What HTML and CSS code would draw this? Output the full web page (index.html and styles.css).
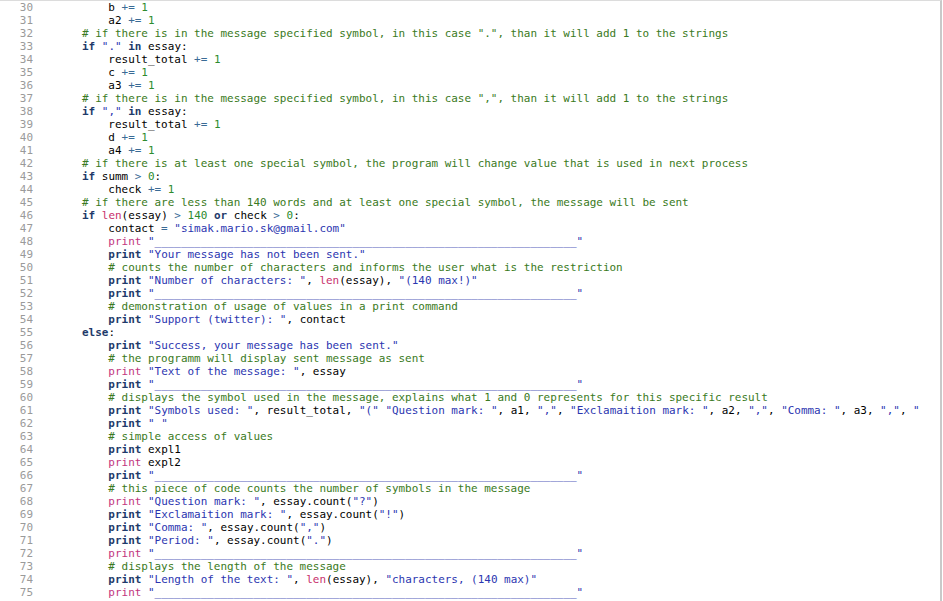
FILE: index.html
```html
<!DOCTYPE html>
<html>
<head>
<meta charset="utf-8">
<link rel="stylesheet" href="styles.css">
</head>
<body>
<div class="viewer">
<div class="ln">30</div><div class="code">        b <span class="o">+=</span> <span class="n">1</span></div>
<div class="ln">31</div><div class="code">        a2 <span class="o">+=</span> <span class="n">1</span></div>
<div class="ln">32</div><div class="code">    <span class="c"># if there is in the message specified symbol, in this case ".", than it will add 1 to the strings</span></div>
<div class="ln">33</div><div class="code">    <span class="k">if</span> <span class="s">"."</span> <span class="k">in</span> essay:</div>
<div class="ln">34</div><div class="code">        result_total <span class="o">+=</span> <span class="n">1</span></div>
<div class="ln">35</div><div class="code">        c <span class="o">+=</span> <span class="n">1</span></div>
<div class="ln">36</div><div class="code">        a3 <span class="o">+=</span> <span class="n">1</span></div>
<div class="ln">37</div><div class="code">    <span class="c"># if there is in the message specified symbol, in this case ",", than it will add 1 to the strings</span></div>
<div class="ln">38</div><div class="code">    <span class="k">if</span> <span class="s">","</span> <span class="k">in</span> essay:</div>
<div class="ln">39</div><div class="code">        result_total <span class="o">+=</span> <span class="n">1</span></div>
<div class="ln">40</div><div class="code">        d <span class="o">+=</span> <span class="n">1</span></div>
<div class="ln">41</div><div class="code">        a4 <span class="o">+=</span> <span class="n">1</span></div>
<div class="ln">42</div><div class="code">    <span class="c"># if there is at least one special symbol, the program will change value that is used in next process</span></div>
<div class="ln">43</div><div class="code">    <span class="k">if</span> summ <span class="o">&gt;</span> <span class="n">0</span>:</div>
<div class="ln">44</div><div class="code">        check <span class="o">+=</span> <span class="n">1</span></div>
<div class="ln">45</div><div class="code">    <span class="c"># if there are less than 140 words and at least one special symbol, the message will be sent</span></div>
<div class="ln">46</div><div class="code">    <span class="k">if</span> <span class="f">len</span>(essay) <span class="o">&gt;</span> <span class="n">140</span> <span class="k">or</span> check <span class="o">&gt;</span> <span class="n">0</span>:</div>
<div class="ln">47</div><div class="code">        contact <span class="o">=</span> <span class="s">"simak.mario.sk@gmail.com"</span></div>
<div class="ln">48</div><div class="code">        <span class="kp">print</span> <span class="s">"________________________________________________________________"</span></div>
<div class="ln">49</div><div class="code">        <span class="k">print</span> <span class="s">"Your message has not been sent."</span></div>
<div class="ln">50</div><div class="code">        <span class="c"># counts the number of characters and informs the user what is the restriction</span></div>
<div class="ln">51</div><div class="code">        <span class="k">print</span> <span class="s">"Number of characters: "</span>, <span class="f">len</span>(essay), <span class="s">"(140 max!)"</span></div>
<div class="ln">52</div><div class="code">        <span class="k">print</span> <span class="s">"________________________________________________________________"</span></div>
<div class="ln">53</div><div class="code">        <span class="c"># demonstration of usage of values in a print command</span></div>
<div class="ln">54</div><div class="code">        <span class="k">print</span> <span class="s">"Support (twitter): "</span>, contact</div>
<div class="ln">55</div><div class="code">    <span class="k">else</span>:</div>
<div class="ln">56</div><div class="code">        <span class="k">print</span> <span class="s">"Success, your message has been sent."</span></div>
<div class="ln">57</div><div class="code">        <span class="c"># the programm will display sent message as sent</span></div>
<div class="ln">58</div><div class="code">        <span class="kp">print</span> <span class="s">"Text of the message: "</span>, essay</div>
<div class="ln">59</div><div class="code">        <span class="k">print</span> <span class="s">"________________________________________________________________"</span></div>
<div class="ln">60</div><div class="code">        <span class="c"># displays the symbol used in the message, explains what 1 and 0 represents for this specific result</span></div>
<div class="ln">61</div><div class="code">        <span class="k">print</span> <span class="s">"Symbols used: "</span>, result_total, <span class="s">"("</span> <span class="s">"Question mark: "</span>, a1, <span class="s">","</span>, <span class="s">"Exclamaition mark: "</span>, a2, <span class="s">","</span>, <span class="s">"Comma: "</span>, a3, <span class="s">","</span>, <span class="s">"</span></div>
<div class="ln">62</div><div class="code">        <span class="k">print</span> <span class="s">" "</span></div>
<div class="ln">63</div><div class="code">        <span class="c"># simple access of values</span></div>
<div class="ln">64</div><div class="code">        <span class="k">print</span> expl1</div>
<div class="ln">65</div><div class="code">        <span class="kp">print</span> expl2</div>
<div class="ln">66</div><div class="code">        <span class="k">print</span> <span class="s">"________________________________________________________________"</span></div>
<div class="ln">67</div><div class="code">        <span class="c"># this piece of code counts the number of symbols in the message</span></div>
<div class="ln">68</div><div class="code">        <span class="kp">print</span> <span class="s">"Question mark: "</span>, essay.count(<span class="s">"?"</span>)</div>
<div class="ln">69</div><div class="code">        <span class="k">print</span> <span class="s">"Exclamaition mark: "</span>, essay.count(<span class="s">"!"</span>)</div>
<div class="ln">70</div><div class="code">        <span class="k">print</span> <span class="s">"Comma: "</span>, essay.count(<span class="s">","</span>)</div>
<div class="ln">71</div><div class="code">        <span class="k">print</span> <span class="s">"Period: "</span>, essay.count(<span class="s">"."</span>)</div>
<div class="ln">72</div><div class="code">        <span class="kp">print</span> <span class="s">"________________________________________________________________"</span></div>
<div class="ln">73</div><div class="code">        <span class="c"># displays the length of the message</span></div>
<div class="ln">74</div><div class="code">        <span class="k">print</span> <span class="s">"Length of the text: "</span>, <span class="f">len</span>(essay), <span class="s">"characters, (140 max)"</span></div>
<div class="ln">75</div><div class="code">        <span class="kp">print</span> <span class="s">"________________________________________________________________"</span></div>
</div>
</body>
</html>
```
FILE: styles.css
```css
html, body {
  margin: 0;
  padding: 0;
  background: #ffffff;
}
.viewer {
  width: 942px;
  height: 601px;
  box-sizing: border-box;
  border-top: 1px solid #dcdcdc;
  border-right: 2px solid #c9c9c9;
  display: grid;
  grid-template-columns: 33px 1fr;
  grid-auto-rows: 13px;
  column-gap: 22.6px;
  align-content: start;
  overflow: hidden;
  font-family: "DejaVu Sans Mono", "Liberation Mono", monospace;
  font-size: 10.96px;
  line-height: 13px;
  color: #000000;
}
.ln {
  text-align: right;
  color: #9a9a9a;
}
.code {
  white-space: pre;
  overflow: hidden;
}
.k {
  color: #1e3a6a;
  font-weight: bold;
}
.kp {
  color: #c2357e;
}
.s {
  color: #2b35b0;
}
.c {
  color: #3a7a22;
}
.n {
  color: #2e8b2e;
}
.o {
  color: #3a6b96;
}
.f {
  color: #c8306c;
}
```
